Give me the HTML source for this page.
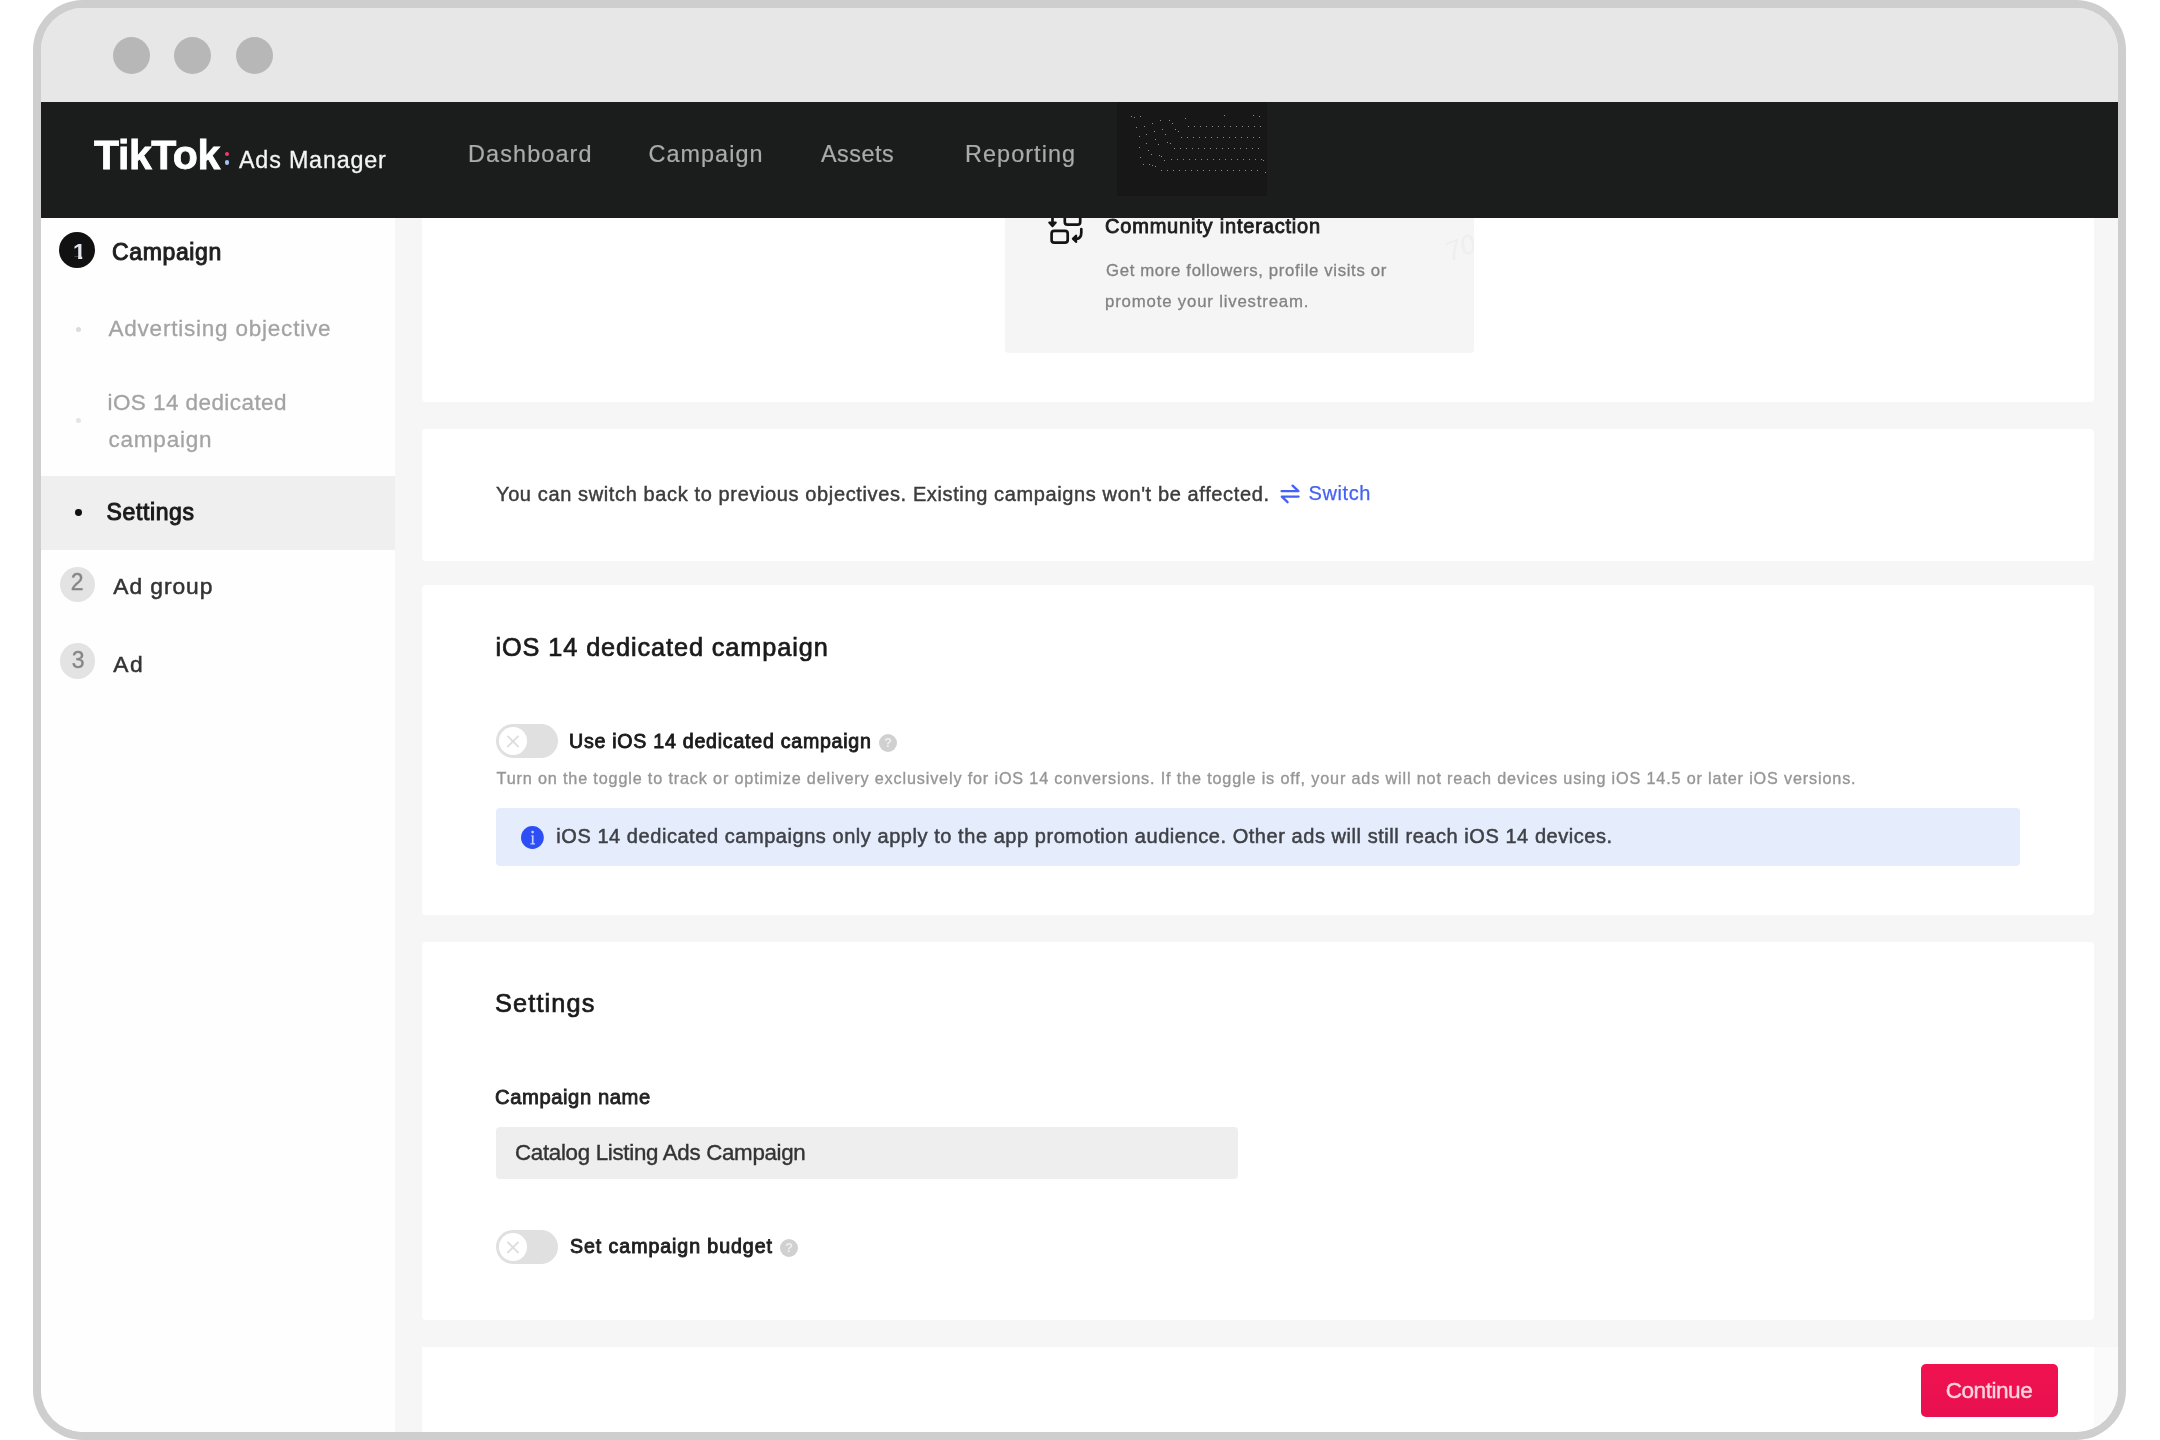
<!DOCTYPE html>
<html lang="en">
<head>
<meta charset="utf-8">
<title>TikTok Ads Manager</title>
<style>
*{box-sizing:border-box}
html,body{margin:0;padding:0}
body{width:2160px;height:1440px;overflow:hidden;position:relative;background:#ffffff;font-family:"Liberation Sans", Arial, sans-serif;}
.abs{position:absolute}
.t{position:absolute;white-space:nowrap;line-height:1;display:block;filter:blur(.6px)}
#bezel{position:absolute;left:33px;top:0;width:2093px;height:1440px;border-radius:50px;background:#cecece}
#win{position:absolute;left:41px;top:8px;width:2077px;height:1424px;border-radius:42px;overflow:hidden;background:#f6f6f6}
#page{position:absolute;left:-41px;top:-8px;width:2160px;height:1440px}
#titlebar{position:absolute;left:41px;top:8px;width:2077px;height:94px;background:#e7e7e7;z-index:20}
.dot{position:absolute;width:37px;height:37px;border-radius:50%;background:#b7b7b7;top:36.5px}
#topnav{position:absolute;left:41px;top:102px;width:2077px;height:116px;background:#1b1c1c;z-index:20}
#sidebar{position:absolute;left:41px;top:218px;width:354px;height:1214px;background:#fefefe}
#sel{position:absolute;left:41px;top:475.6px;width:354px;height:74px;background:#efefef}
.card{position:absolute;left:422px;width:1672px;background:#ffffff;border-radius:4px}
.num{position:absolute;width:35.5px;height:35.5px;border-radius:50%}
.bul{position:absolute;border-radius:50%}
.tg{position:absolute;width:62px;height:33.5px;border-radius:17px;background:#e0e0e0}
.kn{position:absolute;left:3.5px;top:2.8px;width:28px;height:28px;border-radius:50%;background:#ffffff}
.kn svg{display:block}
.hp{position:absolute;width:18px;height:18px;filter:blur(.5px)}
.hp svg{display:block}
</style>
</head>
<body>
<div id="bezel"></div>
<div id="win"><div id="page">

<div id="titlebar"></div>
<div class="dot" style="left:112.5px;z-index:22"></div>
<div class="dot" style="left:174px;z-index:22"></div>
<div class="dot" style="left:235.5px;z-index:22"></div>

<header id="topnav"></header>
<svg class="abs" style="left:1117px;top:102px;z-index:21" width="150" height="94" viewBox="0 0 150 94"><rect width="150" height="94" fill="#171717"/><g fill="#8a8a8a"><rect x="14" y="14" width="1" height="1"/><rect x="19" y="25" width="1" height="1"/><rect x="22" y="34" width="1" height="1"/><rect x="22" y="45" width="1" height="1"/><rect x="23" y="55" width="1" height="1"/><rect x="26" y="62" width="1" height="1"/><rect x="23" y="14" width="1" height="1"/><rect x="27" y="24" width="1" height="1"/><rect x="29" y="32" width="1" height="1"/><rect x="29" y="41" width="1" height="1"/><rect x="31" y="48" width="1" height="1"/><rect x="34" y="52" width="1" height="1"/><rect x="35" y="21" width="1" height="1"/><rect x="37" y="29" width="1" height="1"/><rect x="38" y="37" width="1" height="1"/><rect x="41" y="42" width="1" height="1"/><rect x="42" y="53" width="1" height="1"/><rect x="44" y="54" width="1" height="1"/><rect x="47" y="58" width="1" height="1"/><rect x="43" y="18" width="1" height="1"/><rect x="45" y="27" width="1" height="1"/><rect x="48" y="32" width="1" height="1"/><rect x="50" y="40" width="1" height="1"/><rect x="53" y="41" width="1" height="1"/><rect x="52" y="18" width="1" height="1"/><rect x="55" y="21" width="1" height="1"/><rect x="58" y="27" width="1" height="1"/><rect x="61" y="29" width="1" height="1"/><rect x="68" y="16" width="1" height="1"/><rect x="107" y="13" width="1" height="1"/><rect x="136" y="13" width="1" height="1"/><rect x="142" y="14" width="1" height="1"/><rect x="146" y="58" width="1" height="1"/><rect x="148" y="70" width="1" height="1"/><rect x="32" y="62" width="1" height="1"/><rect x="35" y="63" width="1" height="1"/><rect x="38" y="64" width="1" height="1"/><rect x="17" y="15" width="1" height="1"/><rect x="71" y="24" width="1" height="1"/><rect x="77" y="24" width="1" height="1"/><rect x="83" y="24" width="1" height="1"/><rect x="89" y="24" width="1" height="1"/><rect x="95" y="24" width="1" height="1"/><rect x="101" y="24" width="1" height="1"/><rect x="107" y="24" width="1" height="1"/><rect x="113" y="24" width="1" height="1"/><rect x="119" y="24" width="1" height="1"/><rect x="125" y="24" width="1" height="1"/><rect x="131" y="24" width="1" height="1"/><rect x="137" y="24" width="1" height="1"/><rect x="143" y="24" width="1" height="1"/><rect x="64" y="35" width="1" height="1"/><rect x="70" y="35" width="1" height="1"/><rect x="76" y="35" width="1" height="1"/><rect x="82" y="35" width="1" height="1"/><rect x="88" y="35" width="1" height="1"/><rect x="94" y="35" width="1" height="1"/><rect x="100" y="35" width="1" height="1"/><rect x="106" y="35" width="1" height="1"/><rect x="112" y="35" width="1" height="1"/><rect x="118" y="35" width="1" height="1"/><rect x="124" y="35" width="1" height="1"/><rect x="130" y="35" width="1" height="1"/><rect x="136" y="35" width="1" height="1"/><rect x="142" y="35" width="1" height="1"/><rect x="57" y="46" width="1" height="1"/><rect x="63" y="46" width="1" height="1"/><rect x="69" y="46" width="1" height="1"/><rect x="75" y="46" width="1" height="1"/><rect x="81" y="46" width="1" height="1"/><rect x="87" y="46" width="1" height="1"/><rect x="93" y="46" width="1" height="1"/><rect x="99" y="46" width="1" height="1"/><rect x="105" y="46" width="1" height="1"/><rect x="111" y="46" width="1" height="1"/><rect x="117" y="46" width="1" height="1"/><rect x="123" y="46" width="1" height="1"/><rect x="129" y="46" width="1" height="1"/><rect x="135" y="46" width="1" height="1"/><rect x="141" y="46" width="1" height="1"/><rect x="54" y="57" width="1" height="1"/><rect x="60" y="57" width="1" height="1"/><rect x="66" y="57" width="1" height="1"/><rect x="72" y="57" width="1" height="1"/><rect x="78" y="57" width="1" height="1"/><rect x="84" y="57" width="1" height="1"/><rect x="90" y="57" width="1" height="1"/><rect x="96" y="57" width="1" height="1"/><rect x="102" y="57" width="1" height="1"/><rect x="108" y="57" width="1" height="1"/><rect x="114" y="57" width="1" height="1"/><rect x="120" y="57" width="1" height="1"/><rect x="126" y="57" width="1" height="1"/><rect x="132" y="57" width="1" height="1"/><rect x="138" y="57" width="1" height="1"/><rect x="144" y="57" width="1" height="1"/><rect x="44" y="68" width="1" height="1"/><rect x="50" y="68" width="1" height="1"/><rect x="56" y="68" width="1" height="1"/><rect x="62" y="68" width="1" height="1"/><rect x="68" y="68" width="1" height="1"/><rect x="74" y="68" width="1" height="1"/><rect x="80" y="68" width="1" height="1"/><rect x="86" y="68" width="1" height="1"/><rect x="92" y="68" width="1" height="1"/><rect x="98" y="68" width="1" height="1"/><rect x="104" y="68" width="1" height="1"/><rect x="110" y="68" width="1" height="1"/><rect x="116" y="68" width="1" height="1"/><rect x="122" y="68" width="1" height="1"/><rect x="128" y="68" width="1" height="1"/><rect x="134" y="68" width="1" height="1"/><rect x="140" y="68" width="1" height="1"/></g></svg>
<span class="t" id="logo" style="left:94.00px;top:134.60px;font-size:41px;letter-spacing:-0.409px;color:#ffffff;font-weight:700;-webkit-text-stroke:0.8px #ffffff;z-index:30;">TikTok</span>
<div class="abs" style="left:224.6px;top:151.8px;width:4.4px;height:4.4px;border-radius:50%;background:#f23a6b;z-index:30"></div>
<div class="abs" style="left:224.6px;top:160.4px;width:4.4px;height:4.4px;border-radius:50%;background:#9fc4f5;z-index:30"></div>
<span class="t" id="adsm" style="left:239.00px;top:149.40px;font-size:23.3px;letter-spacing:0.819px;color:#f4f4f4;-webkit-text-stroke:0.3px #f4f4f4;z-index:30;">Ads Manager</span>
<nav><span class="t" id="nav1" style="left:468.00px;top:142.50px;font-size:23.4px;letter-spacing:1.135px;color:#ababab;-webkit-text-stroke:0.2px #ababab;z-index:30;">Dashboard</span><span class="t" id="nav2" style="left:648.50px;top:142.50px;font-size:23.4px;letter-spacing:1.056px;color:#ababab;-webkit-text-stroke:0.2px #ababab;z-index:30;">Campaign</span><span class="t" id="nav3" style="left:821.00px;top:142.50px;font-size:23.4px;letter-spacing:0.500px;color:#ababab;-webkit-text-stroke:0.2px #ababab;z-index:30;">Assets</span><span class="t" id="nav4" style="left:965.00px;top:142.50px;font-size:23.4px;letter-spacing:1.074px;color:#ababab;-webkit-text-stroke:0.2px #ababab;z-index:30;">Reporting</span></nav>

<aside id="sidebar"></aside>
<div id="sel"></div>
<div class="num" style="left:59.3px;top:231.7px;width:36.2px;height:36.2px;background:#111111"></div><span class="t" id="n1" style="left:73.00px;top:240.50px;font-size:22.5px;letter-spacing:0.000px;color:#dfe4ee;font-weight:700;clip-path:polygon(0 0,0.41em 0,0.41em 1em,0.228em 1em,0.228em 0.72em,0 0.72em);">1</span>
<span class="t" id="s1" style="left:112.00px;top:241.00px;font-size:23px;letter-spacing:0.636px;color:#1f1f1f;-webkit-text-stroke:1.0px #1f1f1f;">Campaign</span>
<div class="bul" style="left:76px;top:326.5px;width:5px;height:5px;background:#dcdcdc"></div><span class="t" id="s2" style="left:108.50px;top:317.80px;font-size:22.5px;letter-spacing:0.783px;color:#a3a3a3;-webkit-text-stroke:0.3px #a3a3a3;">Advertising objective</span>
<div class="bul" style="left:76px;top:418.3px;width:5px;height:5px;background:#e4e4e4"></div><span class="t" id="s3" style="left:107.50px;top:391.50px;font-size:22.5px;letter-spacing:0.426px;color:#a3a3a3;-webkit-text-stroke:0.3px #a3a3a3;">iOS 14 dedicated</span><span class="t" id="s4" style="left:108.50px;top:429.00px;font-size:22.5px;letter-spacing:0.779px;color:#a3a3a3;-webkit-text-stroke:0.3px #a3a3a3;">campaign</span>
<div class="bul" style="left:75.3px;top:509.1px;width:6.8px;height:6.8px;background:#111111"></div><span class="t" id="s5" style="left:106.50px;top:500.70px;font-size:23px;letter-spacing:0.628px;color:#1a1a1a;-webkit-text-stroke:1.0px #1a1a1a;">Settings</span>
<div class="num" style="left:59.5px;top:566.6px;background:#e3e3e3"></div><span class="t" id="n2" style="left:70.70px;top:571.00px;font-size:23px;letter-spacing:0.000px;color:#868686;-webkit-text-stroke:0.4px #868686;">2</span><span class="t" id="s6" style="left:113.30px;top:574.70px;font-size:22.8px;letter-spacing:0.936px;color:#333333;-webkit-text-stroke:0.5px #333333;">Ad group</span>
<div class="num" style="left:59.5px;top:643.2px;background:#e3e3e3"></div><span class="t" id="n3" style="left:71.70px;top:649.40px;font-size:23px;letter-spacing:0.000px;color:#868686;-webkit-text-stroke:0.4px #868686;">3</span><span class="t" id="s7" style="left:113.30px;top:652.50px;font-size:22.8px;letter-spacing:1.495px;color:#333333;-webkit-text-stroke:0.5px #333333;">Ad</span>

<!-- card 1: objective (scrolled under header) -->
<section class="card" style="top:200px;height:201.9px"></section>
<div class="abs" style="left:1005px;top:200px;width:469px;height:152.5px;background:#f5f5f5;border-radius:4px"></div>
<svg class="abs" style="left:1040px;top:205px" width="50" height="45" viewBox="1040 205 50 45" fill="none" stroke="#141414" stroke-width="2.7" stroke-linecap="round" stroke-linejoin="round">
  <rect x="1064.8" y="211" width="15.4" height="13.6" rx="2.6"/>
  <path d="M1052.5 211 V224"/>
  <path d="M1049.2 222.6 H1055.8 L1052.5 226.2 Z" fill="#141414" stroke-width="2"/>
  <rect x="1051.6" y="230.8" width="16.1" height="11.8" rx="2.7"/>
  <path d="M1081.3 229.2 V232.4 Q1081.3 238.6 1076.2 238.8"/>
  <path d="M1072.8 238.8 L1076.2 235.6 V242 Z" fill="#141414" stroke-width="2"/>
</svg>
<div class="abs" style="left:1005px;top:218px;width:469px;height:134.5px;overflow:hidden"><span class="t" style="left:441px;top:17px;font-size:27px;font-style:italic;color:#eeeeee;transform:rotate(-22deg)">70</span></div>
<span class="t" id="c1" style="left:1105.00px;top:216.10px;font-size:20.0px;letter-spacing:0.808px;color:#1c1c1c;-webkit-text-stroke:0.85px #1c1c1c;">Community interaction</span><span class="t" id="c2" style="left:1106.00px;top:263.20px;font-size:16.8px;letter-spacing:0.636px;color:#828282;-webkit-text-stroke:0.3px #828282;">Get more followers, profile visits or</span><span class="t" id="c3" style="left:1105.00px;top:294.30px;font-size:16.8px;letter-spacing:0.818px;color:#828282;-webkit-text-stroke:0.3px #828282;">promote your livestream.</span>

<!-- card 2: switch back -->
<section class="card" style="top:428.5px;height:132.3px"></section>
<span class="t" id="m1" style="left:496.00px;top:483.50px;font-size:20.0px;letter-spacing:0.623px;color:#3c3c3c;-webkit-text-stroke:0.45px #3c3c3c;">You can switch back to previous objectives. Existing campaigns won't be affected.</span>
<svg class="abs" style="left:1276px;top:480px;filter:blur(.4px)" width="28" height="28" viewBox="1276 480 28 28" fill="none" stroke="#4461f2" stroke-width="2.3" stroke-linecap="round" stroke-linejoin="round">
  <path d="M1281.6 491.2 H1298.4 L1292.6 485.6"/>
  <path d="M1298.6 496.6 H1281.8 L1287.6 502.2"/>
</svg>
<span class="t" id="m2" style="left:1308.60px;top:483.40px;font-size:20.0px;letter-spacing:0.583px;color:#4461f2;-webkit-text-stroke:0.25px #4461f2;">Switch</span>

<!-- card 3: iOS 14 dedicated campaign -->
<section class="card" style="top:585px;height:330.4px"></section>
<span class="t" id="h1" style="left:495.50px;top:635.10px;font-size:25.3px;letter-spacing:0.895px;color:#1a1a1a;-webkit-text-stroke:0.7px #1a1a1a;">iOS 14 dedicated campaign</span>
<div class="tg" style="left:495.6px;top:724.4px"><div class="kn"><svg width="28" height="28" viewBox="0 0 28 28"><path d="M9 9.4 L19 19.4 M19 9.4 L9 19.4" stroke="#dddddd" stroke-width="1.9" stroke-linecap="round" fill="none"/></svg></div></div>
<span class="t" id="l1" style="left:569.00px;top:731.50px;font-size:19.6px;letter-spacing:0.746px;color:#1a1a1a;-webkit-text-stroke:0.85px #1a1a1a;">Use iOS 14 dedicated campaign</span>
<div class="hp" style="left:878.8px;top:733.6px"><svg width="18" height="18" viewBox="0 0 18 18"><circle cx="9" cy="9" r="9" fill="#d0d0d0"/><text x="9" y="13.4" font-size="12.5" font-weight="700" text-anchor="middle" fill="#efefef" font-family="Liberation Sans, sans-serif">?</text></svg></div>
<span class="t" id="d1" style="left:496.50px;top:770.40px;font-size:16.2px;letter-spacing:0.846px;color:#969696;-webkit-text-stroke:0.35px #969696;">Turn on the toggle to track or optimize delivery exclusively for iOS 14 conversions. If the toggle is off, your ads will not reach devices using iOS 14.5 or later iOS versions.</span>
<div class="abs" style="left:495.6px;top:807.8px;width:1524px;height:58px;background:#e5edfd;border-radius:4px"></div>
<svg class="abs" style="left:521px;top:825.9px;filter:blur(.35px)" width="23" height="23" viewBox="0 0 23 23"><circle cx="11.4" cy="11.5" r="11.4" fill="#2e4ef5"/><circle cx="11.6" cy="6.1" r="1.35" fill="#c3ceff"/><path d="M10.3 9.3 H12.6 V17.2 H14 V18.4 H9.4 V17.2 H10.9 V10.5 H10.3 Z" fill="#c3ceff"/></svg>
<span class="t" id="i1" style="left:556.30px;top:826.40px;font-size:20.0px;letter-spacing:0.553px;color:#3f4147;-webkit-text-stroke:0.5px #3f4147;">iOS 14 dedicated campaigns only apply to the app promotion audience. Other ads will still reach iOS 14 devices.</span>

<!-- card 4: settings -->
<section class="card" style="top:941.6px;height:378px"></section>
<span class="t" id="h2" style="left:495.00px;top:990.60px;font-size:25.3px;letter-spacing:1.149px;color:#1a1a1a;-webkit-text-stroke:0.7px #1a1a1a;">Settings</span>
<span class="t" id="l2" style="left:495.00px;top:1086.50px;font-size:20.2px;letter-spacing:0.592px;color:#222222;-webkit-text-stroke:0.85px #222222;">Campaign name</span>
<div class="abs" style="left:495.8px;top:1126.8px;width:741.8px;height:52px;background:#eeeeee;border-radius:4px"></div>
<span class="t" id="in" style="left:515.00px;top:1142.30px;font-size:22.3px;letter-spacing:-0.294px;color:#333333;-webkit-text-stroke:0.4px #333333;">Catalog Listing Ads Campaign</span>
<div class="tg" style="left:495.6px;top:1230.2px"><div class="kn"><svg width="28" height="28" viewBox="0 0 28 28"><path d="M9 9.4 L19 19.4 M19 9.4 L9 19.4" stroke="#dddddd" stroke-width="1.9" stroke-linecap="round" fill="none"/></svg></div></div>
<span class="t" id="l3" style="left:570.00px;top:1237.40px;font-size:19.6px;letter-spacing:0.931px;color:#1f1f1f;-webkit-text-stroke:0.9px #1f1f1f;">Set campaign budget</span>
<div class="hp" style="left:780.2px;top:1238.8px"><svg width="18" height="18" viewBox="0 0 18 18"><circle cx="9" cy="9" r="9" fill="#d0d0d0"/><text x="9" y="13.4" font-size="12.5" font-weight="700" text-anchor="middle" fill="#efefef" font-family="Liberation Sans, sans-serif">?</text></svg></div>

<!-- footer bar -->
<footer class="abs" style="left:422px;top:1346.9px;width:1672px;height:100px;background:#ffffff"></footer>
<div class="abs" style="left:2094px;top:1346.9px;width:30px;height:100px;background:#fafafa"></div>
<div class="abs" style="left:1921px;top:1364px;width:136.6px;height:53px;background:linear-gradient(#f0124f,#e8104f);border-radius:5px;z-index:4"></div>
<span class="t" id="bt" style="left:1945.70px;top:1379.50px;font-size:22.6px;letter-spacing:-0.482px;color:#fdd3dd;-webkit-text-stroke:0.4px #fdd3dd;z-index:5;">Continue</span>

</div></div>
</body>
</html>
